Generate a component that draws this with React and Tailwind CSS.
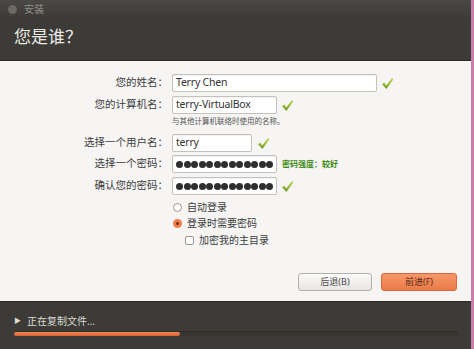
import React from 'react';

const font = { fontFamily: '"Noto Sans", "Noto Sans CJK SC", sans-serif' };

const Check = () => (
  <svg width="13" height="13" viewBox="0 0 13 13" className="shrink-0">
    <defs>
      <linearGradient id="ck" x1="0" y1="0" x2="0" y2="1">
        <stop offset="0" stopColor="#c3dc5a" />
        <stop offset="1" stopColor="#6f9a1f" />
      </linearGradient>
    </defs>
    <path d="M1 7.2 L3.2 5.6 L5.2 8.4 L11 1 L12.4 2.2 L5.4 12 Z" fill="url(#ck)" />
  </svg>
);

const Input = ({ w, children }) => (
  <div
    className={`${w} h-[18px] bg-white border border-[#c4c1bc] rounded-[2px] flex items-center px-[3px] text-[10.5px] tracking-[-0.2px] text-[#333] overflow-hidden shadow-[inset_0_1px_1px_rgba(0,0,0,0.06)]`}
  >
    {children}
  </div>
);

const Dots = () => (
  <div className="flex w-full justify-end gap-[0.5px] overflow-hidden">
    {Array.from({ length: 16 }).map((_, i) => (
      <span key={i} className="w-[7px] h-[7px] rounded-full bg-[#2e2e2e] shrink-0" />
    ))}
  </div>
);

const Label = ({ children }) => (
  <div className="w-[172px] pr-[4px] text-right text-[10.5px] text-[#3c3c3c] shrink-0">{children}</div>
);

export default function App() {
  return (
    <div className="w-[474px] h-[349px] flex bg-[#c77fa8]" style={font}>
      <div className="w-[471px] h-full flex flex-col bg-[#3c3b37]">
        {/* header */}
        <div className="h-[61px] flex flex-col border-b border-[#2b2a27]">
          <div className="h-[18px] flex items-center gap-[7px] pl-[8px] bg-gradient-to-b from-[#4a4945] to-[#3c3b37]">
            <span className="w-[9px] h-[9px] rounded-full bg-[#6a6964]" />
            <span className="text-[10px] text-[#8f8d88]">安装</span>
          </div>
          <div className="flex-1 flex items-center pl-[14px] pb-[4px] text-[17px] text-[#ebe9e4]">您是谁？</div>
        </div>

        {/* body */}
        <div className="h-[240px] bg-[#f6f5f4] flex flex-col pt-[13px]">
          <div className="flex items-center h-[18px]">
            <Label>您的姓名：</Label>
            <Input w="w-[205px]">Terry Chen</Input>
            <span className="ml-[4px]"><Check /></span>
          </div>
          <div className="flex items-center h-[18px] mt-[4px]">
            <Label>您的计算机名：</Label>
            <Input w="w-[105px]">terry-VirtualBox</Input>
            <span className="ml-[4px]"><Check /></span>
          </div>
          <div className="pl-[172px] text-[7.5px] text-[#555] mt-[2px] leading-[10px]">与其他计算机联络时使用的名称。</div>
          <div className="flex items-center h-[18px] mt-[8px]">
            <Label>选择一个用户名：</Label>
            <Input w="w-[80px]">terry</Input>
            <span className="ml-[5px]"><Check /></span>
          </div>
          <div className="flex items-center h-[18px] mt-[3px]">
            <Label>选择一个密码：</Label>
            <Input w="w-[105px]"><Dots /></Input>
            <span className="ml-[5px] text-[8px] font-bold text-[#3b8a12]">密码强度：较好</span>
          </div>
          <div className="flex items-center h-[18px] mt-[4px]">
            <Label>确认您的密码：</Label>
            <Input w="w-[105px]"><Dots /></Input>
            <span className="ml-[4px]"><Check /></span>
          </div>

          <div className="pl-[173px] mt-[4px] flex flex-col text-[10px] text-[#3c3c3c]">
            <div className="flex items-center gap-[5px] h-[16px]">
              <span className="w-[9px] h-[9px] rounded-full border border-[#9a9791] bg-white" />
              <span>自动登录</span>
            </div>
            <div className="flex items-center gap-[5px] h-[16px]">
              <span className="w-[9px] h-[9px] rounded-full bg-[#ef7f4a] flex items-center justify-center">
                <span className="w-[3px] h-[3px] rounded-full bg-[#7a2a10]" />
              </span>
              <span>登录时需要密码</span>
            </div>
            <div className="flex items-center gap-[5px] h-[18px] pl-[12px]">
              <span className="w-[9px] h-[9px] rounded-[2px] border border-[#9a9791] bg-white" />
              <span>加密我的主目录</span>
            </div>
          </div>

          <div className="flex justify-end gap-[9px] pr-[14px] mt-[24px]">
            <button className="w-[74px] h-[18px] rounded-[3px] border border-[#b3b0ab] bg-gradient-to-b from-[#fbfbfa] to-[#e7e5e2] text-[9px] text-[#4a4a4a]">
              后退(B)
            </button>
            <button className="w-[76px] h-[18px] rounded-[3px] border border-[#d9673a] bg-gradient-to-b from-[#f7976a] to-[#ea7a47] text-[9px] text-[#5a2a15]">
              前进(F)
            </button>
          </div>
        </div>

        {/* footer */}
        <div className="flex-1 bg-[#3c3b37] border-t border-[#2b2a27] pt-[13px] pl-[14px] pr-[14px]">
          <div className="flex items-center gap-[6px] text-[10px] text-[#dcdad5] h-[12px]">
            <span className="text-[7px]">▶</span>
            <span>正在复制文件...</span>
          </div>
          <div className="mt-[4px] h-[5px] w-[444px] rounded-full bg-[#35342f] border-t border-[#2e2d29]">
            <div className="h-full w-[166px] rounded-full bg-gradient-to-b from-[#f08a5a] to-[#d95f2a]" />
          </div>
        </div>
      </div>
    </div>
  );
}
